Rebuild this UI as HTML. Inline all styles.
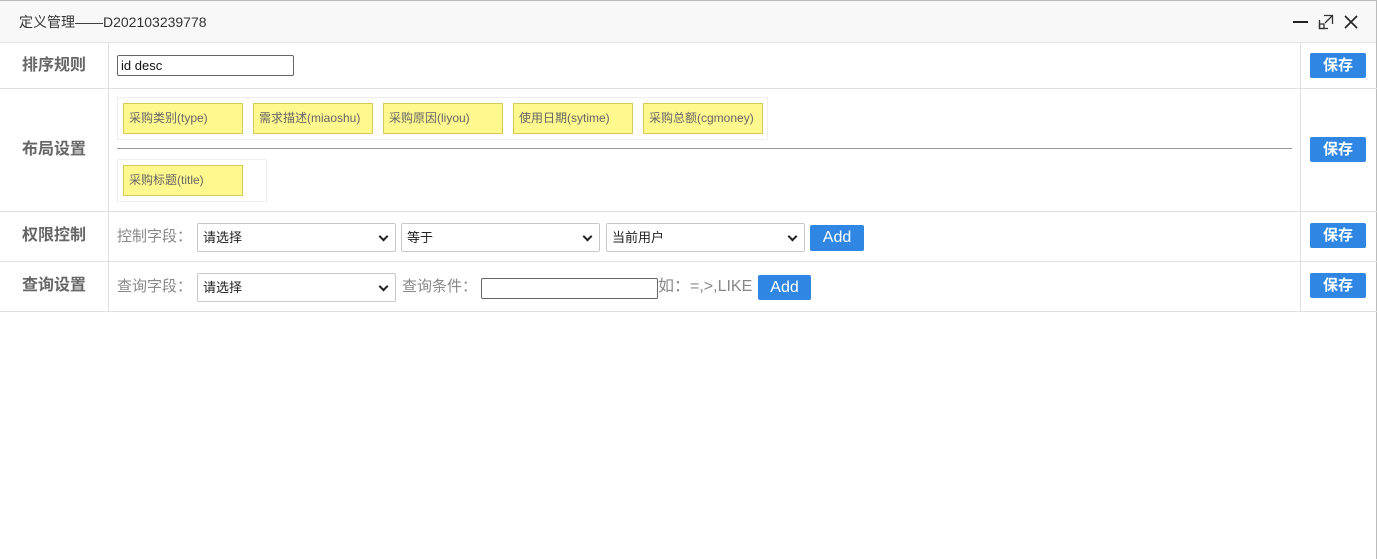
<!DOCTYPE html>
<html><head><meta charset="utf-8"><style>
*{box-sizing:border-box;margin:0;padding:0}
body{width:1377px;height:559px;background:#fff;font-family:"Liberation Sans","Noto Sans CJK SC",sans-serif;position:relative;overflow:hidden}
.a{position:absolute}
.title{left:0;top:0;width:1377px;height:43px;background:#f8f8f8;border-bottom:1px solid #e4e4e4;border-top:1px solid #bbb}
.t{left:19px;top:13px;font-size:14px;color:#333;line-height:18px}
.hl{left:0;width:1377px;height:1px;background:#e0e0e0}
.vl{top:43px;height:268px;width:1px;background:#e0e0e0}
.lab{left:0;width:108px;text-align:center;font-size:16px;font-weight:bold;color:#666;line-height:20px}
.btn{background:#2f87e3;color:#fff;border-radius:2px;font-size:15px;font-weight:bold;text-align:center}
.sv{left:1310px;width:56px;height:25px;line-height:25px}
.tag{top:103px;width:120px;height:31px;background:#fff88e;border:1px solid #d8c95a;font-size:12px;color:#666;line-height:29px;padding-left:5px}
.sel{height:29px;border:1px solid #c8c8c8;border-radius:2px;font-size:13px;color:#222;line-height:28px;padding-left:5px;background:#fff}
.sel:after{content:"";position:absolute;right:8px;top:9px;width:5px;height:5px;border-right:2px solid #222;border-bottom:2px solid #222;transform:rotate(45deg)}
.gt{font-size:15px;color:#888;line-height:20px}
</style></head><body>
<div class="a title"></div>
<div class="a" style="right:0;top:0;width:1px;height:559px;background:#bbb"></div>
<div class="a t">定义管理——D202103239778</div>
<div class="a" style="left:1293px;top:21px;width:15px;height:2px;background:#222"></div>
<svg class="a" style="left:1318px;top:14px" width="16" height="16" viewBox="0 0 16 16" fill="none" stroke="#333" stroke-width="1.3"><path d="M6 1.5H14.5V10M14.5 1.5L7 9M1.5 6V14.5H10"/><rect x="1.5" y="10" width="4.5" height="4.5"/></svg>
<svg class="a" style="left:1344px;top:15px" width="14" height="14" viewBox="0 0 14 14" stroke="#222" stroke-width="1.6"><path d="M1 1L13 13M13 1L1 13"/></svg>
<div class="a hl" style="top:88px"></div>
<div class="a hl" style="top:211px"></div>
<div class="a hl" style="top:261px"></div>
<div class="a hl" style="top:311px"></div>
<div class="a vl" style="left:108px"></div>
<div class="a vl" style="left:1300px"></div>
<div class="a lab" style="top:56px">排序规则</div>
<div class="a lab" style="top:140px">布局设置</div>
<div class="a lab" style="top:226px">权限控制</div>
<div class="a lab" style="top:276px">查询设置</div>
<div class="a btn sv" style="top:53px">保存</div>
<div class="a btn sv" style="top:137px">保存</div>
<div class="a btn sv" style="top:223px">保存</div>
<div class="a btn sv" style="top:273px">保存</div>
<div class="a" style="left:117px;top:55px;width:177px;height:21px;border:1px solid #666;border-radius:2px;font-size:13px;padding-left:3px;line-height:19px;color:#111">id desc</div>
<div class="a" style="left:117px;top:97px;width:651px;height:43px;border:1px solid #eee"></div>
<div class="a tag" style="left:123px">采购类别(type)</div>
<div class="a tag" style="left:253px">需求描述(miaoshu)</div>
<div class="a tag" style="left:383px">采购原因(liyou)</div>
<div class="a tag" style="left:513px">使用日期(sytime)</div>
<div class="a tag" style="left:643px">采购总额(cgmoney)</div>
<div class="a" style="left:117px;top:148px;width:1175px;height:1px;background:#999"></div>
<div class="a" style="left:117px;top:159px;width:150px;height:43px;border:1px solid #eee"></div>
<div class="a tag" style="left:123px;top:165px">采购标题(title)</div>
<div class="a gt" style="left:117px;top:227px">控制字段：</div>
<div class="a sel" style="left:197px;top:223px;width:199px">请选择</div>
<div class="a sel" style="left:401px;top:223px;width:199px">等于</div>
<div class="a sel" style="left:606px;top:223px;width:199px">当前用户</div>
<div class="a btn" style="left:810px;top:225px;width:54px;height:26px;line-height:26px;font-weight:normal;font-size:16px">Add</div>
<div class="a gt" style="left:117px;top:277px">查询字段：</div>
<div class="a sel" style="left:197px;top:273px;width:199px">请选择</div>
<div class="a gt" style="left:402px;top:277px">查询条件：</div>
<div class="a" style="left:481px;top:278px;width:177px;height:21px;border:1px solid #666;border-radius:2px"></div>
<div class="a gt" style="left:658px;top:277px;font-size:16px">如：=,>,LIKE</div>
<div class="a btn" style="left:758px;top:275px;width:53px;height:25px;line-height:25px;font-weight:normal;font-size:16px">Add</div>
</body></html>
